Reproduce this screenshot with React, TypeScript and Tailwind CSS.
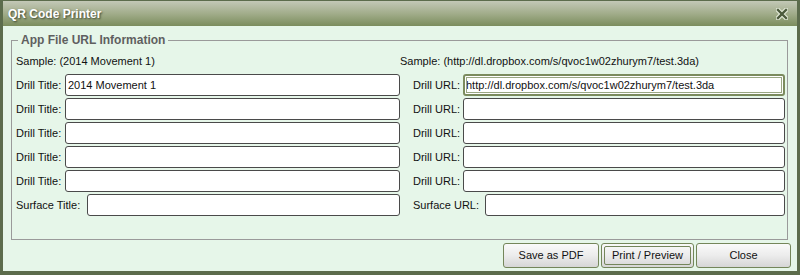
import React from "react";

const FONT = { fontFamily: '"Liberation Sans", Arial, sans-serif' };

function Field({
  label,
  labelWidth,
  value,
  focused,
}: {
  label: string;
  labelWidth: string;
  value?: string;
  focused?: boolean;
}) {
  return (
    <div className="flex h-[22px] items-center">
      <span className={`${labelWidth} shrink-0 text-[11px] text-[#111]`}>{label}</span>
      <input
        type="text"
        defaultValue={value}
        readOnly
        className={
          focused
            ? "h-[22px] min-w-0 flex-1 rounded-[3px] border-2 border-[#7b8b5e] bg-white px-[1px] text-[11px] text-[#111] outline outline-1 -outline-offset-4 outline-[#9aa784]"
            : "h-[22px] min-w-0 flex-1 rounded-[3px] border border-[#4a4a4a] bg-white px-[2px] text-[11px] text-[#111] outline-none"
        }
      />
    </div>
  );
}

function Btn({ label, width, focused }: { label: string; width: string; focused?: boolean }) {
  return (
    <button
      type="button"
      className={`relative h-[25px] ${width} rounded-[3px] border border-[#74865a] bg-gradient-to-b from-[#fafafa] via-[#ececec] to-[#d6d6d6] text-[11px] text-[#111]`}
    >
      {focused && (
        <span className="absolute inset-[2px] rounded-[2px] border border-[#74865a]" />
      )}
      {label}
    </button>
  );
}

export default function App() {
  return (
    <div
      style={FONT}
      className="flex h-[275px] w-[800px] flex-col border-x-[3px] border-b-4 border-t border-[#5c6c4c] bg-[#5c6c4c]"
    >
      {/* Title bar */}
      <div className="flex h-[25px] shrink-0 items-center justify-between bg-gradient-to-b from-[#c3c8b7] via-[#a2ad8b] to-[#7b8d5d] pl-[5px] pr-[9px]">
        <span className="text-[12px] font-bold text-white [text-shadow:1px_1px_2px_#3b4530]">
          QR Code Printer
        </span>
        <svg width="12" height="12" viewBox="0 0 12 12">
          <path d="M2 2 L10 10 M10 2 L2 10" stroke="#e8eede" strokeWidth="4.5" strokeLinecap="square" />
          <path d="M2 2 L10 10 M10 2 L2 10" stroke="#4c5a3c" strokeWidth="2.4" strokeLinecap="square" />
        </svg>
      </div>

      {/* Body */}
      <div className="flex flex-1 flex-col bg-[#e6f6e9] pl-[8px] pr-[6px] pt-[5px]">
        <fieldset className="mr-[4px] h-[209px] border border-[#9a9a9a] pl-[4px] pr-[2px]">
          <legend className="ml-[2px] px-[3px] text-[12px] font-bold text-[#5f5f5f]">
            App File URL Information
          </legend>
          <div className="mt-[1px] flex">
            <div className="flex w-[384px] flex-col gap-[2px]">
              <div className="flex h-[22px] items-center text-[11px] text-[#111]">
                Sample: (2014 Movement 1)
              </div>
              <Field label="Drill Title:" labelWidth="w-[49px]" value="2014 Movement 1" />
              <Field label="Drill Title:" labelWidth="w-[49px]" />
              <Field label="Drill Title:" labelWidth="w-[49px]" />
              <Field label="Drill Title:" labelWidth="w-[49px]" />
              <Field label="Drill Title:" labelWidth="w-[49px]" />
              <Field label="Surface Title:" labelWidth="w-[71px]" />
            </div>
            <div className="flex w-[385px] flex-col gap-[2px]">
              <div className="flex h-[22px] items-center text-[11px] text-[#111]">
                Sample: (http://dl.dropbox.com/s/qvoc1w02zhurym7/test.3da)
              </div>
              <div className="flex flex-col gap-[2px] pl-[13px]">
                <Field
                  label="Drill URL:"
                  labelWidth="w-[50px]"
                  value="http://dl.dropbox.com/s/qvoc1w02zhurym7/test.3da"
                  focused
                />
                <Field label="Drill URL:" labelWidth="w-[50px]" />
                <Field label="Drill URL:" labelWidth="w-[50px]" />
                <Field label="Drill URL:" labelWidth="w-[50px]" />
                <Field label="Drill URL:" labelWidth="w-[50px]" />
                <Field label="Surface URL:" labelWidth="w-[72px]" />
              </div>
            </div>
          </div>
        </fieldset>

        <div className="mt-[3px] flex justify-end gap-[2px]">
          <Btn label="Save as PDF" width="w-[96px]" />
          <Btn label="Print / Preview" width="w-[93px]" focused />
          <Btn label="Close" width="w-[95px]" />
        </div>
      </div>
    </div>
  );
}
